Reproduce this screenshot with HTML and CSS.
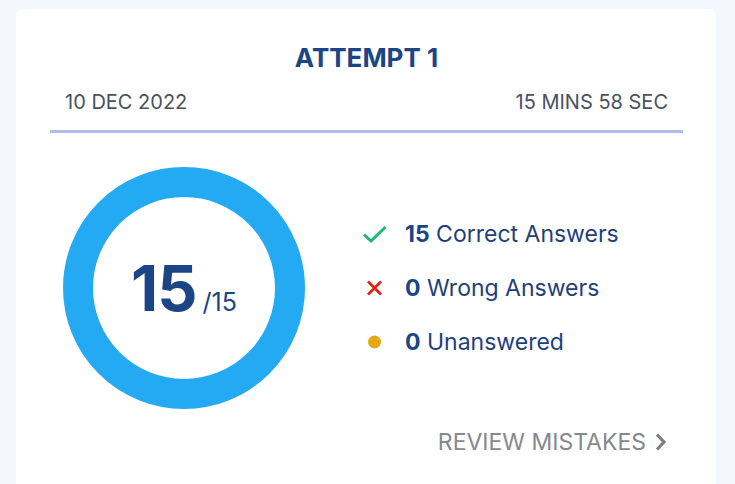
FILE: index.html
```html
<!DOCTYPE html>
<html>
<head>
<meta charset="utf-8">
<link rel="stylesheet" href="styles.css">
</head>
<body>
<div class="card">
  <div class="head">
    <h1 class="title">ATTEMPT 1</h1>
    <div class="meta">
      <span>10 DEC 2022</span>
      <span>15 MINS 58 SEC</span>
    </div>
  </div>
  <div class="body">
    <div class="ring">
      <span class="score">15</span><span class="total">/15</span>
    </div>
    <ul class="stats">
      <li>
        <svg class="ico" width="26" height="20" viewBox="0 0 26 20"><path d="M2 10.5 L9 17 L23.5 3" fill="none" stroke="#1cb877" stroke-width="3"/></svg>
        <span><b>15</b> Correct Answers</span>
      </li>
      <li>
        <svg class="ico" width="26" height="20" viewBox="0 0 26 20"><path d="M6 3.5 L19 16.5 M19 3.5 L6 16.5" fill="none" stroke="#e1231c" stroke-width="2.8"/></svg>
        <span><b>0</b> Wrong Answers</span>
      </li>
      <li>
        <svg class="ico" width="26" height="20" viewBox="0 0 26 20"><circle cx="12.5" cy="10" r="6.5" fill="#e6a812"/></svg>
        <span><b>0</b> Unanswered</span>
      </li>
    </ul>
  </div>
  <div class="foot">
    <a class="review">REVIEW MISTAKES <svg width="13" height="20" viewBox="0 0 13 20"><path d="M3 2.5 L10 10 L3 17.5" fill="none" stroke="#7b7e83" stroke-width="3.2"/></svg></a>
  </div>
</div>
</body>
</html>
```
FILE: styles.css
```css
html, body {
  margin: 0;
  padding: 0;
  background: #f4f7fd;
  font-family: Inter, "Noto Sans", sans-serif;
}
body {
  padding: 9px 19px 0 16px;
  height: 484px;
  box-sizing: border-box;
  overflow: hidden;
}
.card {
  background: #fff;
  border-radius: 7px;
  padding: 0 33px 0 34px;
  height: 500px;
}
.head {
  padding-top: 34px;
  border-bottom: 3px solid #b4b9ee;
}
.title {
  margin: 0;
  text-align: center;
  font-size: 26px;
  font-weight: 700;
  color: #1b4585;
  line-height: 30px;
  letter-spacing: 0;
}
.meta {
  display: flex;
  justify-content: space-between;
  padding: 17px 15px 0;
  height: 40px;
  font-size: 20px;
  color: #4a5160;
  line-height: 24px;
}
.body {
  display: flex;
  align-items: center;
  padding: 34px 0 0 13px;
}
.ring {
  width: 242px;
  height: 242px;
  box-sizing: border-box;
  border: 30px solid #24a9f3;
  border-radius: 50%;
  display: flex;
  align-items: baseline;
  justify-content: center;
  padding-top: 60px;
  color: #1b4585;
}
.score {
  font-size: 63px;
  font-weight: 700;
  line-height: 1;
  letter-spacing: -1px;
}
.total {
  font-size: 25px;
  margin-left: 6px;
  line-height: 1;
}
.stats {
  list-style: none;
  margin: 0 0 0 57px;
  padding: 0;
  display: flex;
  flex-direction: column;
  gap: 30px;
}
.stats li {
  display: flex;
  align-items: center;
  gap: 17px;
  font-size: 23px;
  line-height: 24px;
  color: #1f3f7a;
}
.stats b {
  font-weight: 700;
  color: #1b4585;
}
.foot {
  display: flex;
  justify-content: flex-end;
  padding: 21px 16px 0 0;
}
.review {
  display: flex;
  align-items: center;
  gap: 8px;
  font-size: 23px;
  color: #85888d;
  line-height: 24px;
}
```
